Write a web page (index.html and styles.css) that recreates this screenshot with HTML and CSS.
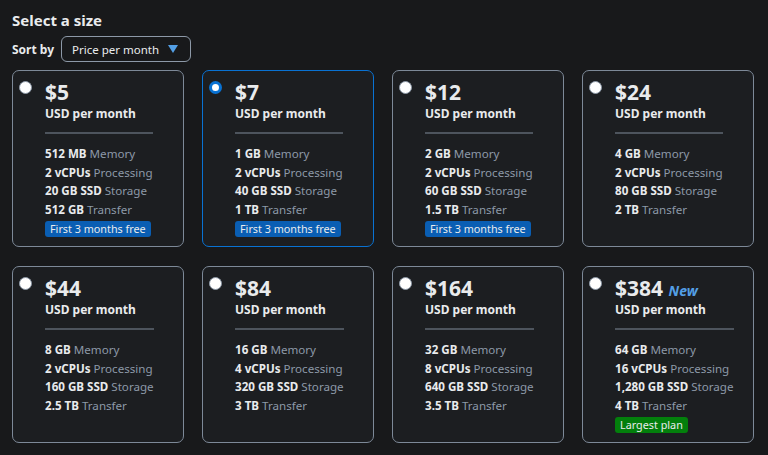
FILE: index.html
```html
<!DOCTYPE html>
<html lang="en">
<head>
    <meta charset="UTF-8">
    <title>Select a size</title>
    <link rel="stylesheet" href="styles.css">
</head>
<body>
    <div class="size-picker">
        <h2 class="title">Select a size</h2>
        <div class="sort-row">
            <span class="sort-label">Sort by</span>
            <div class="select">Price per month <span class="caret"></span></div>
        </div>
        <div class="plan-grid">
            <div class="plan">
                <span class="radio"></span>
                <div class="plan-body">
                    <div class="price">$5</div>
                    <div class="per">USD per month</div>
                    <div class="rule"></div>
                    <div class="spec"><b>512 MB</b> Memory</div>
                    <div class="spec"><b>2 vCPUs</b> Processing</div>
                    <div class="spec"><b>20 GB SSD</b> Storage</div>
                    <div class="spec"><b>512 GB</b> Transfer</div>
                    <span class="badge">First 3 months free</span>
                </div>
            </div>
            <div class="plan selected">
                <span class="radio"></span>
                <div class="plan-body">
                    <div class="price">$7</div>
                    <div class="per">USD per month</div>
                    <div class="rule"></div>
                    <div class="spec"><b>1 GB</b> Memory</div>
                    <div class="spec"><b>2 vCPUs</b> Processing</div>
                    <div class="spec"><b>40 GB SSD</b> Storage</div>
                    <div class="spec"><b>1 TB</b> Transfer</div>
                    <span class="badge">First 3 months free</span>
                </div>
            </div>
            <div class="plan">
                <span class="radio"></span>
                <div class="plan-body">
                    <div class="price">$12</div>
                    <div class="per">USD per month</div>
                    <div class="rule"></div>
                    <div class="spec"><b>2 GB</b> Memory</div>
                    <div class="spec"><b>2 vCPUs</b> Processing</div>
                    <div class="spec"><b>60 GB SSD</b> Storage</div>
                    <div class="spec"><b>1.5 TB</b> Transfer</div>
                    <span class="badge">First 3 months free</span>
                </div>
            </div>
            <div class="plan">
                <span class="radio"></span>
                <div class="plan-body">
                    <div class="price">$24</div>
                    <div class="per">USD per month</div>
                    <div class="rule"></div>
                    <div class="spec"><b>4 GB</b> Memory</div>
                    <div class="spec"><b>2 vCPUs</b> Processing</div>
                    <div class="spec"><b>80 GB SSD</b> Storage</div>
                    <div class="spec"><b>2 TB</b> Transfer</div>
                </div>
            </div>
            <div class="plan">
                <span class="radio"></span>
                <div class="plan-body">
                    <div class="price">$44</div>
                    <div class="per">USD per month</div>
                    <div class="rule"></div>
                    <div class="spec"><b>8 GB</b> Memory</div>
                    <div class="spec"><b>2 vCPUs</b> Processing</div>
                    <div class="spec"><b>160 GB SSD</b> Storage</div>
                    <div class="spec"><b>2.5 TB</b> Transfer</div>
                </div>
            </div>
            <div class="plan">
                <span class="radio"></span>
                <div class="plan-body">
                    <div class="price">$84</div>
                    <div class="per">USD per month</div>
                    <div class="rule"></div>
                    <div class="spec"><b>16 GB</b> Memory</div>
                    <div class="spec"><b>4 vCPUs</b> Processing</div>
                    <div class="spec"><b>320 GB SSD</b> Storage</div>
                    <div class="spec"><b>3 TB</b> Transfer</div>
                </div>
            </div>
            <div class="plan">
                <span class="radio"></span>
                <div class="plan-body">
                    <div class="price">$164</div>
                    <div class="per">USD per month</div>
                    <div class="rule"></div>
                    <div class="spec"><b>32 GB</b> Memory</div>
                    <div class="spec"><b>8 vCPUs</b> Processing</div>
                    <div class="spec"><b>640 GB SSD</b> Storage</div>
                    <div class="spec"><b>3.5 TB</b> Transfer</div>
                </div>
            </div>
            <div class="plan">
                <span class="radio"></span>
                <div class="plan-body">
                    <div class="price">$384 <i class="new">New</i></div>
                    <div class="per">USD per month</div>
                    <div class="rule"></div>
                    <div class="spec"><b>64 GB</b> Memory</div>
                    <div class="spec"><b>16 vCPUs</b> Processing</div>
                    <div class="spec"><b>1,280 GB SSD</b> Storage</div>
                    <div class="spec"><b>4 TB</b> Transfer</div>
                    <span class="badge green">Largest plan</span>
                </div>
            </div>
        </div>
    </div>
</body>
</html>
```

FILE: styles.css
```css
* {
    box-sizing: border-box;
}
body {
    margin: 0;
    background: #18191b;
    color: #e9ebed;
    font-family: "Noto Sans", sans-serif;
}
.size-picker {
    padding: 10px 12px;
}
.title {
    margin: 0 0 6px 0;
    font-size: 15px;
    font-weight: 700;
    line-height: 20px;
}
.sort-row {
    display: flex;
    align-items: center;
    gap: 7px;
    margin-bottom: 8px;
}
.sort-label {
    font-size: 12px;
    font-weight: 700;
}
.select {
    display: flex;
    align-items: center;
    gap: 9px;
    height: 26px;
    padding: 0 12px 0 10px;
    border: 1.5px solid #8d99a8;
    border-radius: 6px;
    font-size: 11.5px;
    color: #e9ebed;
}
.caret {
    width: 0;
    height: 0;
    border-left: 5px solid transparent;
    border-right: 5px solid transparent;
    border-top: 8px solid #539fe5;
}
.plan-grid {
    display: grid;
    grid-template-columns: repeat(4, 172px);
    column-gap: 18px;
    row-gap: 19px;
}
.plan {
    display: flex;
    align-items: flex-start;
    gap: 13px;
    height: 177px;
    padding: 10px 6px;
    border: 1.5px solid #7d8998;
    border-radius: 7px;
    background: #1c1e21;
}
.plan.selected {
    border-color: #0972d3;
}
.radio {
    flex: none;
    width: 13px;
    height: 13px;
    margin-top: 0;
    border: 1.5px solid #8d99a8;
    border-radius: 50%;
    background: #fff;
}
.selected .radio {
    border: 3.5px solid #0972d3;
    background: #fff;
}
.plan-body {
    display: inline-flex;
    flex-direction: column;
    align-items: flex-start;
    min-width: 0;
}
.price {
    font-size: 21px;
    font-weight: 700;
    line-height: 22px;
    height: 22px;
}
.new {
    font-size: 14px;
    font-weight: 700;
    line-height: 14px;
    color: #539fe5;
}
.per {
    margin-top: 3px;
    font-size: 12px;
    font-weight: 700;
    line-height: 16px;
}
.rule {
    align-self: stretch;
    margin: 10px 0 11px;
    border-top: 2px solid #4d545d;
}
.spec {
    font-size: 11.6px;
    line-height: 18.7px;
    color: #8d99a8;
}
.spec b {
    color: #e9ebed;
}
.badge {
    margin-top: 1px;
    padding: 1px 5px;
    border-radius: 3px;
    background: #0a5eb3;
    color: #e9ebed;
    font-size: 10.8px;
    line-height: 14px;
}
.badge.green {
    background: #037f0c;
}
```
